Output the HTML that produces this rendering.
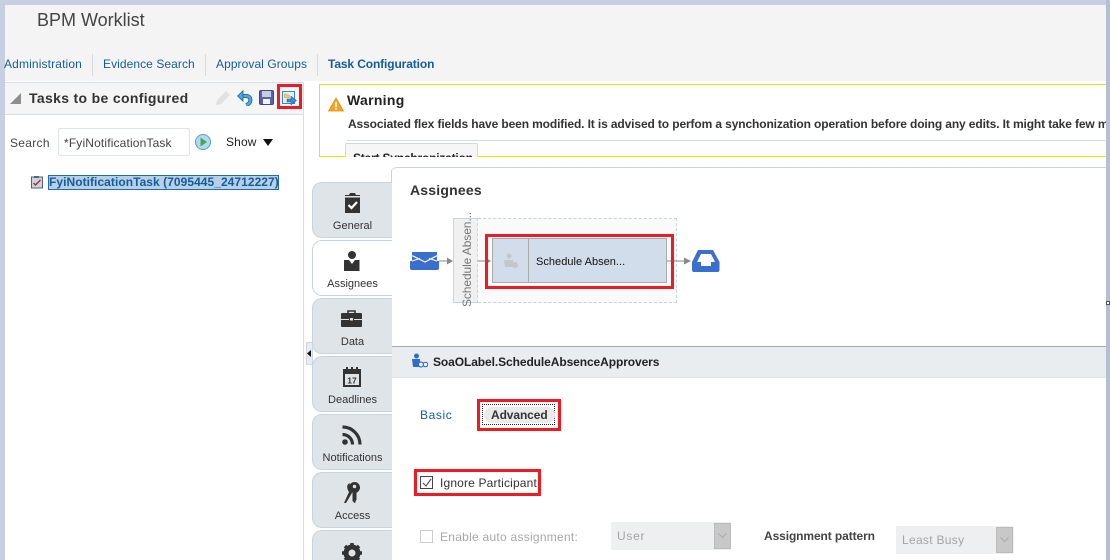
<!DOCTYPE html>
<html>
<head>
<meta charset="utf-8">
<style>
html,body{margin:0;padding:0;width:1110px;height:560px;overflow:hidden;}
body{background:#fff;font-family:"Liberation Sans",Arial,sans-serif;font-size:12px;color:#333;}
#p{position:absolute;left:0;top:0;width:1110px;height:560px;overflow:hidden;background:#fff;}
.a{position:absolute;white-space:nowrap;}
.box{position:absolute;box-sizing:border-box;}
.red{position:absolute;box-sizing:border-box;border:3px solid #ed1c24;}
.nav{position:absolute;top:57px;font-size:12px;color:#145c9e;white-space:nowrap;line-height:15px;}
.sep{position:absolute;top:54px;width:1px;height:22px;background:#d3dbe3;}
.tab{position:absolute;left:312px;width:80px;height:56px;box-sizing:border-box;background:#dfe4e8;border:1px solid #c6d3e2;border-right:none;border-radius:10px 0 0 10px;}
.tab span{position:absolute;left:0;right:0;text-align:center;top:36px;font-size:11px;color:#333;line-height:14px;}
.tab svg{position:absolute;left:27px;top:10px;overflow:visible;}
</style>
</head>
<body>
<div id="p">
<!-- frame -->
<div class="box" style="left:0;top:0;width:1110px;height:5px;background:#c6d0e2;"></div>
<div class="box" style="left:0;top:0;width:5px;height:560px;background:#c6d0e2;"></div>
<div class="box" style="left:1106px;top:0;width:4px;height:560px;background:#b4bfd4;"></div>

<!-- header -->
<div class="box" style="left:5px;top:5px;width:1101px;height:76px;background:#f4f4f4;"></div>
<div class="a" style="left:37px;top:10px;font-size:18px;line-height:20px;color:#444;">BPM Worklist</div>
<div class="nav" style="left:4px;letter-spacing:.14px;">Administration</div>
<div class="sep" style="left:92px;"></div>
<div class="nav" style="left:103px;letter-spacing:.07px;">Evidence Search</div>
<div class="sep" style="left:205px;"></div>
<div class="nav" style="left:216px;letter-spacing:.07px;">Approval Groups</div>
<div class="sep" style="left:317px;"></div>
<div class="nav" style="left:328px;font-weight:bold;letter-spacing:-.12px;">Task Configuration</div>

<!-- left panel -->
<div class="box" style="left:5px;top:82px;width:299px;height:33px;background:#f5f5f5;border-top:1px solid #d5dde6;border-bottom:1px solid #d5dde6;"></div>
<div class="box" style="left:303px;top:82px;width:1px;height:478px;background:#dcdcdc;"></div>
<svg class="a" style="left:10px;top:92px;" width="12" height="12"><path d="M11 1V12H0Z" fill="#8e8e8e"/></svg>
<div class="a" style="left:29px;top:90px;font-size:14px;font-weight:bold;line-height:17px;color:#333;letter-spacing:.33px;">Tasks to be configured</div>
<!-- toolbar icons -->
<svg class="a" style="left:214px;top:89px;" width="18" height="18"><path d="M2 16l1-5L12 2l4 4-9 9z" fill="#e2e2e2"/></svg>
<svg class="a" style="left:237px;top:90px;" width="16" height="16"><path d="M5 6h4c4 0 5 3 4 6-.6 1.500-2 2.500-4 3" fill="none" stroke="#235e93" stroke-width="4"/><path d="M5 6h4c4 0 5 3 4 6-.6 1.500-2 2.500-4 3" fill="none" stroke="#4aa9e2" stroke-width="2.400"/><path d="M.6 6L6 .8V11.200Z" fill="#4aa9e2" stroke="#235e93" stroke-width=".8"/></svg>
<svg class="a" style="left:259px;top:90px;" width="15" height="15"><rect x=".5" y=".5" width="14" height="14" rx="1.500" fill="#5a63a8" stroke="#3d477d"/><rect x="3" y="1" width="9" height="6" fill="#c6cbe6"/><rect x="4" y="9" width="7" height="5" fill="#f2f3f8"/></svg>
<svg class="a" style="left:282px;top:91px;" width="15" height="14"><rect x=".5" y=".5" width="12" height="12" fill="#e6f1fb" stroke="#3d86c6"/><path d="M2.500 3h2l.7 1h2v2.500h-4.700z" fill="#edd36a" stroke="#a98f2c" stroke-width=".5"/><path d="M5 8h4V5l5.500 4.500L9 14v-3H5z" fill="#3a8bd2" stroke="#1e5c99" stroke-width=".5"/></svg>
<div class="red" style="left:277px;top:84px;width:25px;height:25px;"></div>

<div class="a" style="left:10px;top:136px;font-size:12px;line-height:15px;color:#444;letter-spacing:.3px;">Search</div>
<div class="box" style="left:58px;top:128px;width:132px;height:28px;background:#fff;border:1px solid #dfe4ea;border-radius:2px;"></div>
<div class="a" style="left:64px;top:136px;font-size:12px;line-height:15px;color:#444;letter-spacing:.15px;">*FyiNotificationTask</div>
<svg class="a" style="left:194px;top:133px;" width="18" height="18"><circle cx="9" cy="9" r="7.500" fill="#aedbf2" stroke="#5a9cc9"/><path d="M6.500 4.500L13 9l-6.500 4.500z" fill="#4aa84a"/></svg>
<div class="a" style="left:226px;top:135px;font-size:12px;line-height:15px;color:#222;letter-spacing:.15px;">Show</div>
<svg class="a" style="left:263px;top:139px;" width="10" height="7"><path d="M0 0H10L5 7Z" fill="#111"/></svg>
<svg class="a" style="left:30px;top:175px;" width="14" height="14"><rect x="1.500" y="2" width="11" height="11" fill="#c9d6e2" stroke="#4f6478"/><rect x="4" y="1" width="5" height="2" fill="#4f6478"/><path d="M3.500 8l2 2 5-5" fill="none" stroke="#c22" stroke-width="1.500"/></svg>
<div class="a" style="left:48px;top:175px;width:231px;height:15px;box-sizing:border-box;background:#b6d0e6;border:1px solid #2a6ba5;font-size:12px;font-weight:bold;line-height:13px;color:#145c9e;letter-spacing:.05px;">FyiNotificationTask (7095445_24712227)</div>

<!-- warning -->
<div class="box" style="left:319px;top:84px;width:787px;height:73px;background:#fff;border:1px solid #ffdc00;border-right:none;"></div>
<svg class="a" style="left:328px;top:97px;" width="16" height="15"><path d="M8 1L15.500 14H.5Z" fill="#f5a623" stroke="#dd8c12" stroke-width=".8"/><rect x="7.200" y="5" width="1.600" height="5" fill="#fff"/><rect x="7.200" y="11" width="1.600" height="1.600" fill="#fff"/></svg>
<div class="a" style="left:347px;top:92px;font-size:14px;font-weight:bold;line-height:17px;color:#222;letter-spacing:.3px;">Warning</div>
<div class="a" style="left:348px;top:117px;width:758px;overflow:hidden;font-size:12px;font-weight:bold;line-height:15px;color:#333;letter-spacing:-.12px;">Associated flex fields have been modified. It is advised to perfom a synchonization operation before doing any edits. It might take few minutes.</div>
<div class="box" style="left:347px;top:140px;width:759px;height:1px;background:#d5dde6;"></div>
<div class="box" style="left:345px;top:143px;width:133px;height:14px;background:#f6f6f6;border:1px solid #d0d8e0;border-bottom:none;border-radius:2px 2px 0 0;overflow:hidden;">
  <div class="a" style="left:7px;top:7px;font-size:12px;font-weight:bold;line-height:15px;color:#222;letter-spacing:-.2px;">Start Synchronization</div>
</div>
<div class="box" style="left:478px;top:156px;width:628px;height:1px;background:#ffdc00;"></div>

<!-- splitter -->
<div class="box" style="left:306px;top:342px;width:7px;height:23px;background:#e8ecf0;border:1px solid #cfd8e2;"></div>
<svg class="a" style="left:307px;top:350px;" width="5" height="7"><path d="M4 0V7L0 3.500Z" fill="#111"/></svg>

<!-- main panel -->
<div class="box" style="left:391px;top:167px;width:715px;height:393px;background:#fff;border-top:1px solid #ccd3da;border-top-left-radius:6px;"></div>
<div class="box" style="left:391px;top:170px;width:1px;height:12px;background:#ccd3da;"></div>

<!-- tabs -->
<div class="tab" style="top:182px;"><svg width="24" height="24" viewBox="0 0 24 24"><path d="M5 2h4l1-2h5l1 2h4v18H5z" fill="#333"/><rect x="5" y="3" width="15" height="1.500" fill="#dfe4e8"/><path d="M8.500 12l3 3 5.500-6" fill="none" stroke="#fff" stroke-width="2.200"/></svg><span>General</span></div>
<div class="tab" style="top:240px;background:#fff;"><svg width="24" height="24" viewBox="0 0 24 24"><circle cx="12" cy="4" r="4" fill="#333"/><path d="M4 9h5l3 4 3-4h4.500v11H4z" fill="#333"/></svg><span>Assignees</span></div>
<div class="tab" style="top:298px;"><svg width="24" height="24" viewBox="0 0 24 24"><path d="M8 4.500V2h7v2.500" fill="none" stroke="#333" stroke-width="1.600"/><path d="M1 5a1 1 0 0 1 1-1H21a1 1 0 0 1 1 1V10H1z" fill="#333"/><path d="M1 11H22V17a1 1 0 0 1-1 1H2a1 1 0 0 1-1-1z" fill="#333"/><rect x="9.500" y="8.500" width="4" height="3.500" fill="#dfe4e8" stroke="#333"/></svg><span>Data</span></div>
<div class="tab" style="top:356px;"><svg width="24" height="24" viewBox="0 0 24 24"><rect x="4" y="3" width="16" height="16" fill="#dfe4e8" stroke="#333" stroke-width="2"/><rect x="3" y="2" width="18" height="5" fill="#333"/><rect x="6" y="0" width="2" height="3" fill="#333"/><rect x="11" y="0" width="2" height="3" fill="#333"/><rect x="16" y="0" width="2" height="3" fill="#333"/><text x="12" y="16.500" font-size="8.500" font-weight="bold" text-anchor="middle" fill="#333" font-family="Liberation Sans">17</text></svg><span>Deadlines</span></div>
<div class="tab" style="top:414px;"><svg width="24" height="24" viewBox="0 0 24 24"><circle cx="5" cy="17" r="2.800" fill="#333"/><path d="M2.500 9.500a10 10 0 0 1 10 10M2.500 2a17.500 17.500 0 0 1 17.500 17.500" fill="none" stroke="#333" stroke-width="3.200"/></svg><span>Notifications</span></div>
<div class="tab" style="top:472px;"><svg style="top:9px;" width="24" height="24" viewBox="0 0 24 24"><path d="M9.500 1C6 3 7 7 9 10L4 21h2L12 11z" fill="#333"/><circle cx="14.500" cy="5.500" r="5.500" fill="#333"/><circle cx="14.500" cy="4.500" r="1.700" fill="#dfe4e8"/><path d="M12.500 10h4v8l-1 1v1.500l-1 .5-2-2z" fill="#333"/></svg><span>Access</span></div>
<div class="tab" style="top:530px;height:40px;"><svg width="24" height="24" viewBox="0 0 24 24"><path d="M12 2v20M2 12h20M5 5l14 14M19 5L5 19" stroke="#333" stroke-width="3.500"/><circle cx="12" cy="12" r="6" fill="none" stroke="#333" stroke-width="5"/><circle cx="12" cy="12" r="3.500" fill="#dfe4e8"/></svg></div>

<!-- Assignees -->
<div class="a" style="left:410px;top:182px;font-size:14px;font-weight:bold;line-height:17px;color:#333;letter-spacing:.2px;">Assignees</div>

<!-- diagram -->
<div class="box" style="left:453px;top:218px;width:224px;height:85px;background:#fafafa;border:1px dashed #c5d6e3;"></div>
<div class="box" style="left:453px;top:218px;width:25px;height:85px;background:#f0f0f0;border:1px solid #c5d6e3;border-right:1px dashed #c5d6e3;"></div>
<div class="a" style="left:460px;top:307px;transform:rotate(-90deg);transform-origin:0 0;font-size:12px;line-height:14px;color:#777;letter-spacing:-.1px;">Schedule Absen...</div>
<svg class="a" style="left:410px;top:252px;" width="29" height="18" viewBox="0 0 29 18"><path d="M2 0H27V9H29V16a2 2 0 0 1-2 2H2a2 2 0 0 1-2-2V9H2Z" fill="#3b6fcd"/><path d="M2.300 3.700L15 10 27 3.700" fill="none" stroke="#fff" stroke-width="1.200"/><path d="M2 9L10 6.500M27 9L19 6.500" stroke="#fff" stroke-width="1"/></svg>
<svg class="a" style="left:439px;top:256px;" width="15" height="10"><path d="M0 5H9" stroke="#888" stroke-width="1"/><path d="M8 1.500L14 5 8 8.500z" fill="#888"/></svg>
<svg class="a" style="left:478px;top:256px;" width="14" height="10"><path d="M0 5H10" stroke="#888" stroke-width="1"/><path d="M8 2L13 5 8 8z" fill="#888"/></svg>
<div class="box" style="left:492px;top:238px;width:175px;height:45px;background:#d1ddea;border:1px solid #aaa;"></div>
<div class="box" style="left:528px;top:238px;width:1px;height:45px;background:#aaa;"></div>
<svg class="a" style="left:503px;top:253px;" width="18" height="16"><circle cx="6" cy="3" r="2.500" fill="#c4c7c9"/><path d="M1 7h9v7H2z" fill="#c4c7c9"/><circle cx="12" cy="12" r="3" fill="#c4c7c9"/></svg>
<div class="a" style="left:536px;top:255px;font-size:11px;line-height:14px;color:#111;letter-spacing:.03px;">Schedule Absen...</div>
<svg class="a" style="left:667px;top:256px;" width="25" height="10"><path d="M0 5H18" stroke="#888" stroke-width="1"/><path d="M17 1.500L24 5 17 8.500z" fill="#888"/></svg>
<svg class="a" style="left:692px;top:250px;" width="28" height="23" viewBox="0 0 28 23"><path d="M6 0H21L27.500 12V20a2 2 0 0 1-2 2H2a2 2 0 0 1-2-2V12Z" fill="#3b6fcd"/><path d="M9 4H19L23 12H19V16H9V12H5Z" fill="#fff"/></svg>
<div class="red" style="left:485px;top:234px;width:189px;height:55px;"></div>

<!-- section header -->
<div class="box" style="left:392px;top:346px;width:714px;height:31px;background:#eaedf0;border-top:1px solid #a8a8a8;"></div>
<div class="box" style="left:392px;top:377px;width:714px;height:1px;background:#dde3ea;"></div>
<svg class="a" style="left:412px;top:353px;" width="16" height="16"><circle cx="4.500" cy="3" r="2.500" fill="#2f6fc9"/><path d="M0 6h8v8H1z" fill="#2f6fc9"/><circle cx="9" cy="11.500" r="2.500" fill="#fff" stroke="#2f6fc9" stroke-width="1.200"/><circle cx="13.500" cy="11.500" r="2.200" fill="#fff" stroke="#2f6fc9" stroke-width="1.200"/></svg>
<div class="a" style="left:433px;top:355px;font-size:12px;font-weight:bold;line-height:15px;color:#222;letter-spacing:-.09px;">SoaOLabel.ScheduleAbsenceApprovers</div>

<!-- basic/advanced -->
<div class="a" style="left:420px;top:408px;font-size:12px;line-height:15px;color:#145c9e;letter-spacing:.6px;">Basic</div>
<div class="box" style="left:482px;top:404px;width:73px;height:21px;border:1px dotted #222;"></div>
<div class="box" style="left:484px;top:407px;width:71px;height:16px;background:#eaeaea;border-radius:8px;"></div>
<div class="a" style="left:491px;top:408px;font-size:12px;font-weight:bold;line-height:15px;color:#333;letter-spacing:-.1px;">Advanced</div>
<div class="red" style="left:477px;top:399px;width:84px;height:32px;"></div>

<!-- ignore participant -->
<div class="box" style="left:420px;top:476px;width:13px;height:13px;background:#fff;border:1px solid #444;"></div>
<svg class="a" style="left:421px;top:477px;" width="12" height="12"><path d="M2 6l3 3 5-7" fill="none" stroke="#555" stroke-width="1.200"/></svg>
<div class="a" style="left:440px;top:476px;font-size:12px;line-height:15px;color:#333;letter-spacing:.16px;">Ignore Participant</div>
<div class="red" style="left:414px;top:469px;width:127px;height:27px;"></div>

<!-- enable row -->
<div class="box" style="left:420px;top:530px;width:13px;height:13px;background:#fff;border:1px solid #ccc;"></div>
<div class="a" style="left:440px;top:530px;font-size:12px;line-height:15px;color:#a8a8a8;letter-spacing:.26px;">Enable auto assignment:</div>
<div class="box" style="left:611px;top:522px;width:120px;height:28px;background:#eeeff1;border-radius:2px;"></div>
<div class="a" style="left:617px;top:529px;font-size:12px;line-height:15px;color:#a4a4a4;letter-spacing:.7px;">User</div>
<div class="box" style="left:714px;top:523px;width:17px;height:26px;background:#c8c8c8;border:1px solid #bbb;"></div>
<svg class="a" style="left:718px;top:533px;" width="9" height="6"><path d="M.5 .5L4.500 4.500 8.500 .5" fill="none" stroke="#aaa"/></svg>
<div class="a" style="left:764px;top:529px;font-size:12px;font-weight:bold;line-height:15px;color:#444;letter-spacing:-.1px;">Assignment pattern</div>
<div class="box" style="left:896px;top:526px;width:118px;height:28px;background:#eeeff1;border-radius:2px;"></div>
<div class="a" style="left:902px;top:533px;font-size:12px;line-height:15px;color:#a4a4a4;letter-spacing:.3px;">Least Busy</div>
<div class="box" style="left:996px;top:527px;width:17px;height:26px;background:#c8c8c8;border:1px solid #bbb;"></div>
<svg class="a" style="left:1000px;top:537px;" width="9" height="6"><path d="M.5 .5L4.500 4.500 8.500 .5" fill="none" stroke="#aaa"/></svg>

<!-- tiny right handle -->
<div class="box" style="left:1106px;top:301px;width:4px;height:4px;background:#fff;border:1px solid #555;"></div>
</div>
</body>
</html>
